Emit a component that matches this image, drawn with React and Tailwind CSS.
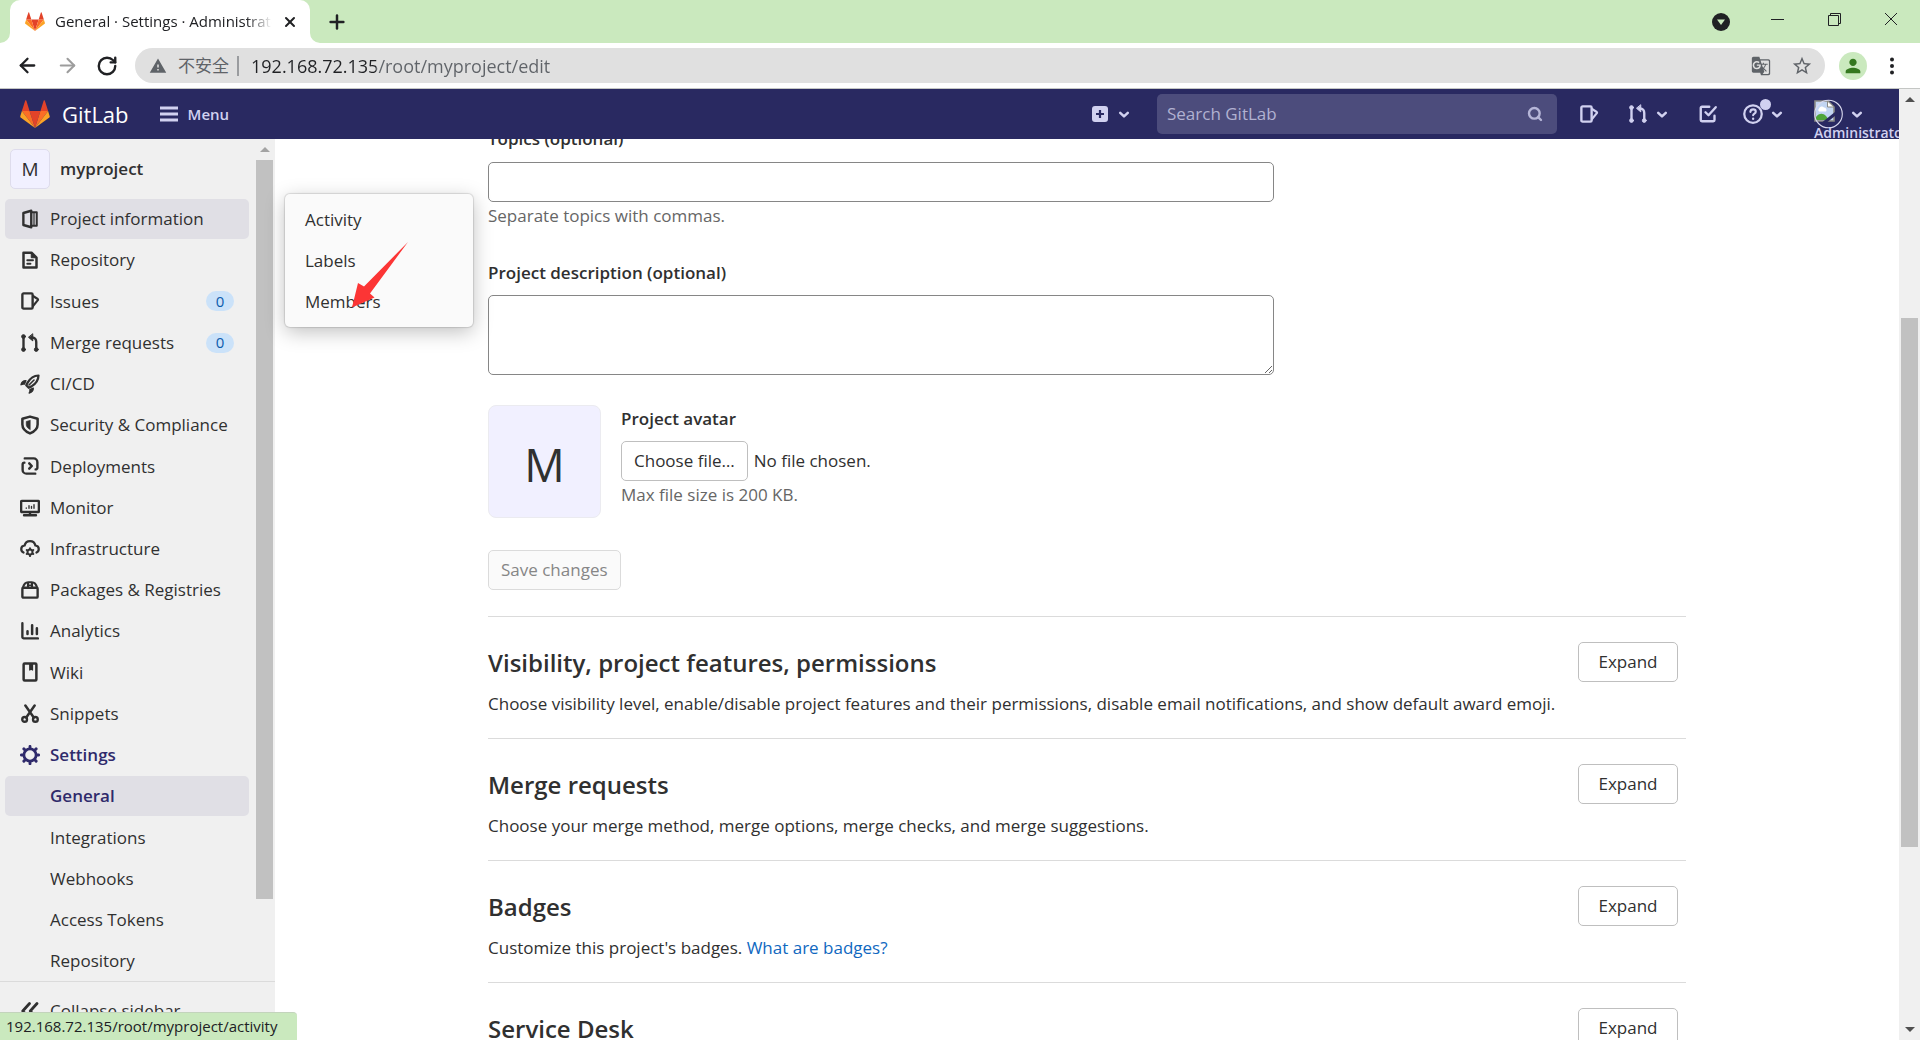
import { ArrowLeft, ArrowRight, Plus, RotateCw, Search, X } from 'lucide-react';
import { MdGTranslate, MdPerson, MdStarBorder, MdWarning } from 'react-icons/md';

const Icon = ({ children, className = 'w-5 h-5' }) => (
  <svg
    viewBox="0 0 16 16"
    className={`${className} flex-shrink-0`}
    fill="none"
    stroke="currentColor"
    strokeWidth="1.9"
    strokeLinecap="round"
    strokeLinejoin="round"
    aria-hidden="true"
  >
    {children}
  </svg>
);

const icons = {
  project: (
    <>
      <path d="M2.7 3.2 9 1.4v13.2l-6.3-1.8z" />
      <path d="M9.6 2.6h3.8v10.8H9.6" strokeWidth="1.6" />
      <path d="M11.2 3v10" strokeWidth="1" />
    </>
  ),
  repository: (
    <>
      <path d="M2.8 2.1h6.4l4 4v7.8H2.8z" strokeWidth="2" />
      <path d="M9 2.2v4h4z" fill="currentColor" strokeWidth="0.8" />
      <path d="M5.8 8.2h4.6M5.8 11h2.6" strokeWidth="1.5" />
    </>
  ),
  issues: (
    <>
      <rect x="1.9" y="1.9" width="8.2" height="12.2" rx="1" />
      <path d="m10.4 4 3.8 2.4a.6.6 0 0 1 .1.9l-3.9 4.7" strokeWidth="1.7" />
    </>
  ),
  merge: (
    <>
      <circle cx="2.8" cy="2.8" r="1.5" fill="currentColor" strokeWidth="0.8" />
      <circle cx="2.8" cy="13.2" r="1.5" fill="currentColor" strokeWidth="0.8" />
      <circle cx="13" cy="13.2" r="1.5" fill="currentColor" strokeWidth="0.8" />
      <path d="M2.8 3v10M13 13V7.2c0-2.2-1.1-3.6-3.4-3.6" />
      <path d="M10.2.9v5.4L7 3.6z" fill="currentColor" strokeWidth="0.8" />
    </>
  ),
  rocket: (
    <>
      <path d="M14.8 1.2c-3.6.1-6.3 1.6-8.7 5.7L5 9l2 2 2.2-1.1c3.9-2.3 5.5-5 5.6-8.7z" strokeWidth="1.8" />
      <path d="m7.2 8.8 4-4" strokeWidth="1.3" />
      <path
        d="M4.7 5.4C2.7 5.3 1.4 6.3.8 8.6c.9-.6 1.7-.8 2.7-.5zM10.6 11.3c.1 2-.9 3.3-3.2 3.9.6-.9.8-1.7.5-2.7z"
        fill="currentColor"
        strokeWidth="1.1"
      />
    </>
  ),
  shield: (
    <>
      <path d="M8 1.3 1.9 3v4.5c0 3.3 2.4 5.6 6.1 7.2 3.7-1.6 6.1-3.9 6.1-7.2V3z" strokeWidth="2" />
      <path d="M8 4.3 5 5.2v2.4c0 1.6 1 2.9 3 4z" fill="currentColor" strokeWidth="0.5" />
    </>
  ),
  deploy: (
    <>
      <path d="M3.8 1.9h7.1a3 3 0 0 1 3 3v4.4a1.4 1.4 0 0 1-1.4 1.4M12.2 14.1H5.1a3 3 0 0 1-3-3V6.7a1.4 1.4 0 0 1 1.4-1.4" />
      <path d="m7.4 5.9 2 2.1-2 2.1" strokeWidth="2" />
    </>
  ),
  monitor: (
    <>
      <rect x=".9" y="2.3" width="14.2" height="8.9" rx=".5" />
      <path d="M8 11.5v2M3.2 13.8h9.6" />
      <path d="M5 7.9v.3M7.2 6.2v2M9.2 6.8v1.4M11.2 5.4v2.8" strokeWidth="1.1" />
    </>
  ),
  cloud: (
    <>
      <path
        d="M2.8 10.8A3 3 0 0 1 1 8c0-1.5 1.2-2.7 2.7-2.8C4.2 3 5.9 1.7 8 1.7s3.8 1.3 4.3 3.5C13.8 5.3 15 6.5 15 8a3 3 0 0 1-1.8 2.8"
        strokeWidth="1.8"
      />
      <circle cx="8" cy="10.4" r="2" strokeWidth="1.6" />
      <path d="M8 7.3v.6M8 12.9v.8M5.3 8.8l.6.4M10.1 11.6l.6.4M10.7 8.8l-.6.4M5.9 11.6l-.6.4" strokeWidth="1.5" />
    </>
  ),
  package: (
    <>
      <rect x="1.9" y="6.2" width="12.2" height="7.9" rx=".8" />
      <path d="M2.3 6.2c.6-2.3 2.1-4.4 4.2-4.4h3c2.1 0 3.6 2.1 4.2 4.4M6.4 2v3.2M9.6 2v3.2" strokeWidth="1.7" />
      <path d="M6.4 4.2h3.2" strokeWidth="1.2" />
    </>
  ),
  chart: (
    <>
      <path d="M1.9 1.7v11a1.2 1.2 0 0 0 1.2 1.2h11.2" />
      <path d="M6 8.2v2.1M9.7 3.3v7M13.5 5.7v4.6" strokeWidth="2" />
    </>
  ),
  wiki: (
    <>
      <rect x="2.9" y="1.2" width="10.2" height="13.6" rx=".8" strokeWidth="2" />
      <path d="M7.8 1.4v5l1.1-.8 1.1.8v-5z" strokeWidth="1" fill="currentColor" />
    </>
  ),
  snippets: (
    <>
      <circle cx="3.7" cy="12.3" r="1.9" />
      <circle cx="12.3" cy="12.3" r="1.9" />
      <path d="m4.3 1.2 6.7 9.6M11.7 1.2 5 10.8" strokeWidth="2" />
    </>
  ),
  settings: (
    <>
      <circle cx="8" cy="8" r="4.9" strokeWidth="2.2" />
      <path
        d="M8 1.1v1.2M8 13.7v1.2M1.1 8h1.2M13.7 8h1.2M3.1 3.1l.9.9M12 12l.9.9M12.9 3.1l-.9.9M4 12l-.9.9"
        strokeWidth="2.3"
      />
    </>
  ),
  todo: (
    <>
      <path d="M9 2.2H3.2a1 1 0 0 0-1 1v9.6a1 1 0 0 0 1 1h9a1 1 0 0 0 1-1V9.4" />
      <path d="m6 6.6 2.4 2.4 5.8-6.4" />
    </>
  ),
  help: (
    <>
      <circle cx="8" cy="8" r="7" strokeWidth="1.8" />
      <path d="M5.9 6.3c.1-1.3 1-2 2.2-2s2.1.7 2.1 1.8c0 1.5-2.1 1.5-2.1 2.9" strokeWidth="1.7" />
      <path d="M8.1 11.7v.1" />
    </>
  ),
  collapse: <path d="M7.6 2 2.2 8l5.4 6M13.6 2 8.2 8l5.4 6" strokeWidth="2.2" />,
};

const navItems = [
  { label: 'Project information', icon: 'project', hovered: true },
  { label: 'Repository', icon: 'repository' },
  { label: 'Issues', icon: 'issues', count: 0 },
  { label: 'Merge requests', icon: 'merge', count: 0 },
  { label: 'CI/CD', icon: 'rocket' },
  { label: 'Security & Compliance', icon: 'shield' },
  { label: 'Deployments', icon: 'deploy' },
  { label: 'Monitor', icon: 'monitor' },
  { label: 'Infrastructure', icon: 'cloud' },
  { label: 'Packages & Registries', icon: 'package' },
  { label: 'Analytics', icon: 'chart' },
  { label: 'Wiki', icon: 'wiki' },
  { label: 'Snippets', icon: 'snippets' },
  { label: 'Settings', icon: 'settings', active: true },
  { label: 'General', active: true, hovered: true },
  { label: 'Integrations' },
  { label: 'Webhooks' },
  { label: 'Access Tokens' },
  { label: 'Repository' },
];

const sections = [
  {
    title: 'Visibility, project features, permissions',
    text: 'Choose visibility level, enable/disable project features and their permissions, disable email notifications, and show default award emoji.',
  },
  {
    title: 'Merge requests',
    text: 'Choose your merge method, merge options, merge checks, and merge suggestions.',
  },
  { title: 'Badges', text: "Customize this project's badges.", link: 'What are badges?' },
  { title: 'Service Desk', text: '' },
];

const Tanuki = ({ className }) => (
  <svg viewBox="0 0 36 34" className={className} aria-hidden="true">
    <path d="M18 34 24.6 13.3H11.4z" fill="#e24329" />
    <path d="M18 34 11.4 13.3H2.1z" fill="#fc6d26" />
    <path d="M2.1 13.3.1 19.6a1.4 1.4 0 0 0 .5 1.5L18 34z" fill="#fca326" />
    <path d="M2.1 13.3h9.3L7.4.6a.7.7 0 0 0-1.3 0z" fill="#e24329" />
    <path d="m18 34 6.6-20.7h9.3z" fill="#fc6d26" />
    <path d="m33.9 13.3 2 6.3a1.4 1.4 0 0 1-.5 1.5L18 34z" fill="#fca326" />
    <path d="M33.9 13.3h-9.3l4-12.7a.7.7 0 0 1 1.3 0z" fill="#e24329" />
  </svg>
);

const Chevron = () => (
  <Icon className="w-4 h-4">
    <path d="M4.2 6.8 8 10.4l3.8-3.6" strokeWidth="2.5" />
  </Icon>
);

const Triangle = ({ down, className = '' }) => (
  <svg viewBox="0 0 10 5" className={`w-[10px] h-[5px] ${className}`} aria-hidden="true">
    <path d={down ? 'M0 0h10L5 5z' : 'M0 5h10L5 0z'} fill="currentColor" />
  </svg>
);

const BrowserTabs = () => (
  <div className="flex h-[43px] flex-shrink-0 items-stretch bg-[#cae9be] pl-[10px] text-[#202124]">
    <div className="relative flex w-[300px] items-center rounded-t-[10px] bg-white pl-[15px] pr-3">
      <Tanuki className="mr-[10px] w-5 h-[19px] flex-shrink-0" />
      <span className="flex-1 overflow-hidden whitespace-nowrap text-[15px] [mask-image:linear-gradient(90deg,#000_88%,transparent)]">
        General · Settings · Administrator
      </span>
      <button aria-label="Close tab" className="ml-[10px]">
        <X className="w-4 h-4" strokeWidth={3} />
      </button>
      <svg viewBox="0 0 10 10" className="absolute -left-[10px] bottom-0 w-[10px] h-[10px]" aria-hidden="true">
        <path d="M10 0v10H0A10 10 0 0 0 10 0z" fill="#fff" />
      </svg>
      <svg viewBox="0 0 10 10" className="absolute -right-[10px] bottom-0 w-[10px] h-[10px]" aria-hidden="true">
        <path d="M0 0v10h10A10 10 0 0 1 0 0z" fill="#fff" />
      </svg>
    </div>
    <button aria-label="New tab" className="ml-4">
      <Plus className="w-[22px] h-[22px]" strokeWidth={2.7} />
    </button>
    <div className="ml-auto flex items-center gap-10 pb-[6px] pr-[21px]">
      <button aria-label="Search tabs" className="mt-[6px]">
        <svg viewBox="0 0 20 20" className="w-5 h-5" aria-hidden="true">
          <circle cx="10" cy="10" r="9" fill="#202124" />
          <path d="M6 7.5h8L10 13z" fill="#cae9be" />
        </svg>
      </button>
      <button aria-label="Minimize">
        <svg viewBox="0 0 16 16" className="w-4 h-4" stroke="currentColor" aria-hidden="true">
          <path d="M0 8.5h13" />
        </svg>
      </button>
      <button aria-label="Restore">
        <svg viewBox="0 0 16 16" className="w-4 h-4" fill="none" stroke="currentColor" aria-hidden="true">
          <path d="M1.5 4.5h10v10h-10zM3.5 4V2.5h10v10H12" />
        </svg>
      </button>
      <button aria-label="Close window">
        <svg viewBox="0 0 16 16" className="w-4 h-4" stroke="currentColor" aria-hidden="true">
          <path d="m2 2 12 12M14 2 2 14" />
        </svg>
      </button>
    </div>
  </div>
);

const AddressBar = () => (
  <div className="flex h-[46px] flex-shrink-0 items-center border-b border-[#c4c6c4] bg-white pl-4 pr-[18px] text-[#202124]">
    <button aria-label="Back">
      <ArrowLeft className="w-[23px] h-[23px]" strokeWidth={2.4} />
    </button>
    <button aria-label="Forward" className="ml-[17px] text-[#9d9d9d]">
      <ArrowRight className="w-[23px] h-[23px]" strokeWidth={2.2} />
    </button>
    <button aria-label="Reload" className="ml-[17px]">
      <RotateCw className="w-[22px] h-[22px]" strokeWidth={2.6} />
    </button>
    <div className="ml-[17px] flex h-[35px] flex-1 items-center rounded-full bg-[#e0e0e0] pl-[14px] pr-3 text-[#5f6368]">
      <MdWarning className="w-[18px] h-[18px]" />
      <span className="ml-[11px] whitespace-nowrap">不安全</span>
      <span className="ml-2 h-5 w-[2px] bg-[#9a9c9f]" />
      <input
        type="text"
        aria-label="Address"
        defaultValue="192.168.72.135/root/myproject/edit"
        className="ml-3 h-full flex-1 bg-[linear-gradient(90deg,#202124_125px,#5f6368_125px)] bg-clip-text text-[18px] text-transparent outline-none"
      />
      <button aria-label="Translate this page">
        <MdGTranslate className="w-5 h-5" />
      </button>
      <button aria-label="Bookmark this tab" className="ml-5">
        <MdStarBorder className="w-[22px] h-[22px]" />
      </button>
    </div>
    <button
      aria-label="Profile"
      className="ml-[14px] flex w-7 h-7 items-center justify-center rounded-full bg-[#cae9be] text-[#34781f]"
    >
      <MdPerson className="w-[22px] h-[22px]" />
    </button>
    <button aria-label="Browser menu" className="ml-[15px]">
      <svg viewBox="0 0 20 20" className="w-5 h-5" fill="currentColor" aria-hidden="true">
        <circle cx="10" cy="3.5" r="2" />
        <circle cx="10" cy="10" r="2" />
        <circle cx="10" cy="16.5" r="2" />
      </svg>
    </button>
  </div>
);

const Navbar = () => (
  <header className="flex h-[50px] flex-shrink-0 items-center overflow-hidden bg-[#292961] pl-5 text-[#d1d1f0]">
    <a href="#home" className="flex items-center gap-3 text-white">
      <Tanuki className="w-[30px] h-7" />
      <span className="text-[22px] leading-7">GitLab</span>
    </a>
    <button className="ml-[31px] flex items-center gap-[10px] text-[15px] font-semibold">
      <svg viewBox="0 0 18 16" className="w-[18px] h-4" stroke="currentColor" strokeWidth="3" aria-hidden="true">
        <path d="M0 2h18M0 8h18M0 14h18" />
      </svg>
      Menu
    </button>
    <button aria-label="Create new" className="ml-auto flex items-center gap-2">
      <svg viewBox="0 0 16 16" className="w-4 h-4" aria-hidden="true">
        <rect x="0" y="0" width="16" height="16" rx="3" fill="currentColor" />
        <path d="M8 4v8M4 8h8" stroke="#292961" strokeWidth="2.2" />
      </svg>
      <Chevron />
    </button>
    <label className="ml-[25px] flex h-10 w-[400px] items-center rounded-[5px] bg-[#4c4c7c] px-[10px]">
      <input
        type="search"
        aria-label="Search GitLab"
        placeholder="Search GitLab"
        className="min-w-0 flex-1 bg-transparent text-[17px] outline-none placeholder:text-[#b1b1d1]"
      />
      <Search className="mr-1 w-4 h-4 text-[#b6b6d8]" strokeWidth={3.6} />
    </label>
    <a href="#issues" aria-label="Issues" className="ml-[22px]">
      <Icon>{icons.issues}</Icon>
    </a>
    <button aria-label="Merge requests" className="ml-[29px] flex items-center gap-1.5">
      <Icon>{icons.merge}</Icon>
      <Chevron />
    </button>
    <a href="#todos" aria-label="To-Do List" className="ml-7">
      <Icon>{icons.todo}</Icon>
    </a>
    <button aria-label="Help" className="relative ml-[25px] flex items-center gap-1.5">
      <Icon>{icons.help}</Icon>
      <Chevron />
      <span className="absolute -top-[5px] left-[17px] w-[11px] h-[11px] rounded-full bg-[#d1d1f0]" />
    </button>
    <button aria-label="Administrator" className="relative ml-[28px] flex w-[86px] items-center gap-1.5">
      <svg viewBox="0 0 30 30" className="w-[30px] h-[30px]" aria-hidden="true">
        <path d="M2 2h13l6 6v14H2z" fill="#c2d5f2" />
        <path d="M6 12.5a2 2 0 0 1 0-3 3 3 0 0 1 5-1 2.5 2.5 0 0 1 2 4z" fill="#fff" />
        <path d="M3 21v-3c3-4 7-4 10-1l3 4z" fill="#4fa53a" />
        <path d="M2 22V2h13l6 6v14z" fill="none" stroke="#8b8b86" strokeWidth="1.6" />
        <path d="M14.5 2v6H21z" fill="#fff" stroke="#8b8b86" />
        <path d="m9.5 23 12.5-10v4L14.5 23z" fill="#292961" />
        <circle cx="15.5" cy="15" r="13.8" fill="none" stroke="#d9d9ee" strokeWidth="1.1" />
      </svg>
      <Chevron />
      <span className="absolute left-[1px] top-6 text-[14px] leading-5 font-semibold">Administrator</span>
    </button>
  </header>
);

const NavItem = ({ label, icon, count, active, hovered }) => (
  <li>
    <a
      href="#nav"
      className={`ml-[5px] mr-[7px] flex h-10 items-center rounded-[5px] pl-[15px] pr-[15px] ${
        active ? 'font-semibold text-[#2f2a6b]' : 'text-[#303030]'
      } ${hovered ? 'bg-[#e0dfe5]' : ''}`}
    >
      {icon ? <Icon>{icons[icon]}</Icon> : <span className="w-5" />}
      <span className="ml-[10px] flex-1 whitespace-nowrap">{label}</span>
      {count !== undefined && (
        <span className="flex h-5 w-7 items-center justify-center rounded-full bg-[#cbe2f9] text-[15px] text-[#0b5cad]">
          {count}
        </span>
      )}
    </a>
  </li>
);

const Sidebar = () => (
  <aside className="relative z-10 flex w-[275px] flex-shrink-0 flex-col bg-[#f0f0f0]">
    <div className="flex min-h-0 flex-1">
      <nav className="flex min-w-0 flex-1 flex-col">
        <a href="#project" className="mb-[10px] mt-[10px] flex h-10 flex-shrink-0 items-center pl-[10px] text-[#303030]">
          <span className="flex w-10 h-10 items-center justify-center rounded-[5px] border border-[#dedcec] bg-[#f1f0ff] text-[19px]">
            M
          </span>
          <span className="ml-[10px] font-semibold">myproject</span>
        </a>
        <ul className="flex flex-1 flex-col justify-between">
          {navItems.map((item, i) => (
            <NavItem key={i} {...item} />
          ))}
        </ul>
      </nav>
      <div className="mr-[2px] flex w-[17px] flex-col items-center">
        <div className="flex h-[21px] items-center">
          <Triangle className="text-[#a3a3a3]" />
        </div>
        <div className="w-full grow-[739] bg-[#c1c1c1]" />
        <div className="grow-[82]" />
      </div>
    </div>
    <button className="flex h-[59px] flex-shrink-0 items-center border-t border-[#dbdbdb] pl-5 text-[#303030]">
      <Icon>{icons.collapse}</Icon>
      <span className="ml-[10px]">Collapse sidebar</span>
    </button>

    {/* Project information flyout */}
    <div className="absolute left-[285px] top-[55px] w-[188px] rounded-[5px] bg-[#fafafa] py-[5px] text-[#303030] shadow-[0_0_1px_1px_rgba(0,0,0,0.12),0_5px_20px_rgba(0,0,0,0.25)]">
      {['Activity', 'Labels', 'Members'].map((label) => (
        <a key={label} href="#flyout" className="flex h-[41px] items-center pl-5">
          {label}
        </a>
      ))}
      <svg viewBox="0 0 56 66" className="absolute left-[67px] top-12 w-14 h-[66px]" aria-hidden="true">
        <path d="M56 0 18 51.5 22.5 55.5 0 65.5 6 41 12 44.5z" fill="#fc3535" />
      </svg>
    </div>
  </aside>
);

const ProjectForm = () => (
  <form className="-mt-3 border-b border-[#dbdbdb] pb-[26px]">
    <div className="max-w-[786px]">
      <label htmlFor="topics" className="block font-semibold leading-6">
        Topics (optional)
      </label>
      <input
        id="topics"
        type="text"
        className="mt-[11px] block h-10 w-full rounded-[5px] border border-[#868686] px-3 outline-none"
      />
      <p className="mt-[2px] leading-6 text-[#666]">Separate topics with commas.</p>
      <label htmlFor="description" className="mt-[33px] block font-semibold leading-6">
        Project description (optional)
      </label>
      <textarea
        id="description"
        className="mt-[10px] block h-20 w-full rounded-[5px] border border-[#868686] px-3 outline-none"
      />
    </div>
    <div className="mt-[30px] flex gap-5">
      <div className="flex w-[113px] h-[113px] items-center justify-center rounded-[8px] border border-[#ebebf0] bg-[#f1f0ff] pt-[6px] text-[45px]">
        M
      </div>
      <div className="pt-[2px]">
        <p className="font-semibold leading-6">Project avatar</p>
        <div className="mt-[10px] flex items-center gap-[6px]">
          <button type="button" className="h-10 rounded-[5px] border border-[#bfbfbf] bg-white px-3">
            Choose file…
          </button>
          <span>No file chosen.</span>
        </div>
        <p className="mt-[2px] leading-6 text-[#666]">Max file size is 200 KB.</p>
      </div>
    </div>
    <button
      type="submit"
      disabled
      className="mt-8 block h-10 rounded-[5px] border border-[#dbdbdb] bg-[#fafafa] px-3 text-[#868686]"
    >
      Save changes
    </button>
  </form>
);

const SettingsSection = ({ title, text, link }) => (
  <section className="flex h-[122px] items-start justify-between border-b border-[#dbdbdb] pr-2 pt-[25px]">
    <div>
      <h4 className="mt-[2px] text-[24px] leading-[38px] font-semibold">{title}</h4>
      <p className="mt-[10px] leading-6">
        {text}{' '}
        {link && (
          <a href="#badges" className="text-[#1068bf]">
            {link}
          </a>
        )}
      </p>
    </div>
    <button className="h-10 w-[100px] flex-shrink-0 rounded-[5px] border border-[#bfbfbf] bg-white">Expand</button>
  </section>
);

const App = () => {
  return (
    <div className="relative flex h-screen flex-col overflow-hidden bg-white font-['Open_Sans','Noto_Sans_CJK_SC',sans-serif] text-[17px] text-[#303030]">
      <BrowserTabs />
      <AddressBar />
      <div className="flex min-h-0 flex-1">
        <div className="flex min-w-0 flex-1 flex-col">
          <Navbar />
          <div className="flex min-h-0 flex-1">
            <Sidebar />
            <main className="min-w-0 flex-1 overflow-hidden">
              <div className="mx-auto max-w-[1198px]">
                <ProjectForm />
                {sections.map((section) => (
                  <SettingsSection key={section.title} {...section} />
                ))}
              </div>
            </main>
          </div>
        </div>

        {/* Page scrollbar */}
        <div className="flex w-[21px] flex-shrink-0 flex-col items-center bg-[#f0f0f0] text-[#505050]">
          <div className="flex h-[21px] items-center">
            <Triangle />
          </div>
          <div className="grow-[208]" />
          <div className="w-[17px] grow-[529] bg-[#c1c1c1]" />
          <div className="grow-[172]" />
          <div className="flex h-[21px] items-center">
            <Triangle down />
          </div>
        </div>
      </div>

      {/* Link preview */}
      <div className="absolute bottom-0 left-0 z-20 flex h-7 w-[297px] items-center rounded-tr-[4px] border-t border-[#c3d4bc] bg-[#cae9be] pl-[6px] text-[15px] text-[#202124]">
        192.168.72.135/root/myproject/activity
      </div>
    </div>
  );
};

export default App;
